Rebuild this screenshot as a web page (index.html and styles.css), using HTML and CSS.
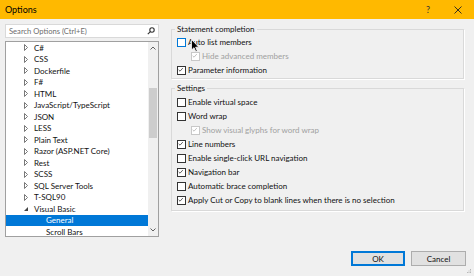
FILE: index.html
```html
<!DOCTYPE html>
<html lang="en">
<head>
  <meta charset="UTF-8">
  <title>Options</title>
  <link rel="stylesheet" href="styles.css">
</head>
<body>
  <div class="window">
    <div class="titlebar">
      <span class="title">Options</span>
      <span class="help">?</span>
      <svg class="close" width="8" height="8" viewBox="0 0 8 8"><path d="M0.5 0.5 L7.5 7.5 M7.5 0.5 L0.5 7.5"/></svg>
    </div>
    <div class="main">
      <div class="nav">
        <div class="search">
          <span class="placeholder">Search Options (Ctrl+E)</span>
          <svg class="magnifier" width="8" height="8" viewBox="0 0 8 8"><circle cx="5" cy="3" r="2.2"/><path d="M3.4 4.6 L0.8 7.2"/></svg>
        </div>
        <div class="tree">
          <ul class="items">
            <li><svg class="arrow" width="4" height="7" viewBox="0 0 4 7"><path d="M0.5 0.5 L3.5 3.5 L0.5 6.5 Z"/></svg>C#</li>
            <li><svg class="arrow" width="4" height="7" viewBox="0 0 4 7"><path d="M0.5 0.5 L3.5 3.5 L0.5 6.5 Z"/></svg>CSS</li>
            <li><svg class="arrow" width="4" height="7" viewBox="0 0 4 7"><path d="M0.5 0.5 L3.5 3.5 L0.5 6.5 Z"/></svg>Dockerfile</li>
            <li><svg class="arrow" width="4" height="7" viewBox="0 0 4 7"><path d="M0.5 0.5 L3.5 3.5 L0.5 6.5 Z"/></svg>F#</li>
            <li><svg class="arrow" width="4" height="7" viewBox="0 0 4 7"><path d="M0.5 0.5 L3.5 3.5 L0.5 6.5 Z"/></svg>HTML</li>
            <li><svg class="arrow" width="4" height="7" viewBox="0 0 4 7"><path d="M0.5 0.5 L3.5 3.5 L0.5 6.5 Z"/></svg>JavaScript/TypeScript</li>
            <li><svg class="arrow" width="4" height="7" viewBox="0 0 4 7"><path d="M0.5 0.5 L3.5 3.5 L0.5 6.5 Z"/></svg>JSON</li>
            <li><svg class="arrow" width="4" height="7" viewBox="0 0 4 7"><path d="M0.5 0.5 L3.5 3.5 L0.5 6.5 Z"/></svg>LESS</li>
            <li><svg class="arrow" width="4" height="7" viewBox="0 0 4 7"><path d="M0.5 0.5 L3.5 3.5 L0.5 6.5 Z"/></svg>Plain Text</li>
            <li><svg class="arrow" width="4" height="7" viewBox="0 0 4 7"><path d="M0.5 0.5 L3.5 3.5 L0.5 6.5 Z"/></svg>Razor (ASP.NET Core)</li>
            <li><svg class="arrow" width="4" height="7" viewBox="0 0 4 7"><path d="M0.5 0.5 L3.5 3.5 L0.5 6.5 Z"/></svg>Rest</li>
            <li><svg class="arrow" width="4" height="7" viewBox="0 0 4 7"><path d="M0.5 0.5 L3.5 3.5 L0.5 6.5 Z"/></svg>SCSS</li>
            <li><svg class="arrow" width="4" height="7" viewBox="0 0 4 7"><path d="M0.5 0.5 L3.5 3.5 L0.5 6.5 Z"/></svg>SQL Server Tools</li>
            <li><svg class="arrow" width="4" height="7" viewBox="0 0 4 7"><path d="M0.5 0.5 L3.5 3.5 L0.5 6.5 Z"/></svg>T-SQL90</li>
            <li><svg class="arrow open" width="4" height="7" viewBox="0 0 4 7"><path d="M4 2 L4 6 L0 6 Z"/></svg>Visual Basic</li>
            <li class="child selected">General</li>
            <li class="child">Scroll Bars</li>
          </ul>
          <div class="scrollbar">
            <svg class="chevron" width="6" height="4" viewBox="0 0 6 4"><path d="M0.5 3.5 L3 1 L5.5 3.5"/></svg>
            <div class="track"><div class="thumb"></div></div>
            <svg class="chevron" width="6" height="4" viewBox="0 0 6 4"><path d="M0.5 0.5 L3 3 L5.5 0.5"/></svg>
          </div>
        </div>
      </div>
      <div class="pane">
        <fieldset class="group first">
          <legend>Statement completion</legend>
          <div class="option"><span class="box hover"></span>Auto list members</div>
          <div class="option indent disabled"><span class="box checked"><svg viewBox="0 0 9 9"><path d="M1.8 4.6 L3.6 6.4 L7.2 2.4"/></svg></span>Hide advanced members</div>
          <div class="option"><span class="box checked"><svg viewBox="0 0 9 9"><path d="M1.8 4.6 L3.6 6.4 L7.2 2.4"/></svg></span>Parameter information</div>
        </fieldset>
        <fieldset class="group second">
          <legend>Settings</legend>
          <div class="option"><span class="box"></span>Enable virtual space</div>
          <div class="option"><span class="box"></span>Word wrap</div>
          <div class="option indent disabled"><span class="box checked"><svg viewBox="0 0 9 9"><path d="M1.8 4.6 L3.6 6.4 L7.2 2.4"/></svg></span>Show visual glyphs for word wrap</div>
          <div class="option"><span class="box checked"><svg viewBox="0 0 9 9"><path d="M1.8 4.6 L3.6 6.4 L7.2 2.4"/></svg></span>Line numbers</div>
          <div class="option"><span class="box"></span>Enable single-click URL navigation</div>
          <div class="option"><span class="box checked"><svg viewBox="0 0 9 9"><path d="M1.8 4.6 L3.6 6.4 L7.2 2.4"/></svg></span>Navigation bar</div>
          <div class="option"><span class="box"></span>Automatic brace completion</div>
          <div class="option"><span class="box checked"><svg viewBox="0 0 9 9"><path d="M1.8 4.6 L3.6 6.4 L7.2 2.4"/></svg></span>Apply Cut or Copy to blank lines when there is no selection</div>
        </fieldset>
      </div>
    </div>
    <div class="footer">
      <button class="btn default">OK</button>
      <button class="btn">Cancel</button>
    </div>
    <svg class="grip" width="5" height="5" viewBox="0 0 5 5"><rect x="3" y="0" width="1" height="1"/><rect x="1.5" y="1.5" width="1" height="1"/><rect x="3" y="1.5" width="1" height="1"/><rect x="0" y="3" width="1" height="1"/><rect x="1.5" y="3" width="1" height="1"/><rect x="3" y="3" width="1" height="1"/></svg>
    <svg class="cursor" width="9" height="14" viewBox="0 0 9 14"><path d="M0.5 0.5 L0.5 11 L3 8.7 L4.8 12.6 L6.3 11.9 L4.6 8.2 L7.8 8.2 Z"/></svg>
  </div>
</body>
</html>
```
FILE: styles.css
```css
* {
  box-sizing: border-box;
}
body {
  margin: 0;
  font-family: Lato, "Liberation Sans", sans-serif;
  font-size: 8px;
  color: #111;
  background: #f0f0f0;
}
.window {
  position: relative;
  width: 474px;
  height: 276px;
  display: flex;
  flex-direction: column;
  background: #f0f0f0;
}
.titlebar {
  height: 19px;
  background: #ffb900;
  display: flex;
  align-items: center;
  padding: 0 12px 0 5px;
}
.titlebar .title {
  flex: 1;
  font-size: 9px;
  color: #000;
}
.titlebar .help {
  font-size: 9px;
  margin-right: 24px;
  color: #333;
}
.titlebar .close path {
  stroke: #222;
  stroke-width: 0.9;
  fill: none;
}
.main {
  flex: 1;
  display: flex;
  gap: 12px;
  padding: 5px 10px 0 5px;
}
.nav {
  width: 154px;
  display: flex;
  flex-direction: column;
  gap: 3px;
}
.search {
  height: 14px;
  background: #fff;
  border: 1px solid #d9d9d9;
  display: flex;
  align-items: center;
  justify-content: space-between;
  padding: 0 3px;
  color: #6d6d6d;
  font-size: 7.6px;
}
.magnifier circle,
.magnifier path {
  fill: none;
  stroke: #333;
  stroke-width: 1.1;
}
.tree {
  height: 196px;
  background: #fff;
  border: 1px solid #a0a0a0;
  display: flex;
}
.items {
  flex: 1;
  list-style: none;
  margin: 0;
  padding: 0;
}
.items li {
  height: 11.5px;
  display: flex;
  align-items: center;
  padding-left: 18px;
}
.items li.child {
  padding-left: 40px;
}
.items li.selected {
  background: #0078d7;
  color: #fff;
}
.arrow {
  margin-right: 6px;
  flex-shrink: 0;
}
.arrow path {
  fill: #fff;
  stroke: #6a6a6a;
  stroke-width: 0.9;
}
.arrow.open path {
  fill: #444;
  stroke: none;
}
.scrollbar {
  width: 10px;
  background: #f0f0f0;
  display: flex;
  flex-direction: column;
  align-items: center;
}
.chevron {
  margin: 4px 0;
}
.chevron path {
  fill: none;
  stroke: #606060;
  stroke-width: 1;
}
.track {
  flex: 1;
  width: 100%;
  padding-top: 34px;
}
.thumb {
  height: 50px;
  margin: 0 1px;
  background: #cdcdcd;
}
.pane {
  flex: 1;
  display: flex;
  flex-direction: column;
  gap: 4px;
}
.group {
  margin: 0;
  padding: 1px 0 1px 5px;
  border: 1px solid #d9d9d9;
  box-shadow: 1px 1px 0 #fff;
  min-width: 0;
}
.group.second {
  padding-top: 2px;
  padding-bottom: 3px;
}
.group legend {
  padding: 0 2px;
  margin-left: -2px;
  line-height: 10px;
}
.option {
  height: 14px;
  display: flex;
  align-items: center;
  gap: 2px;
}
.option.indent {
  padding-left: 14px;
}
.option.disabled {
  color: #a0a0a0;
}
.box {
  width: 9px;
  height: 9px;
  border: 1px solid #333;
  background: #fff;
  flex-shrink: 0;
  display: flex;
}
.box svg {
  width: 7px;
  height: 7px;
}
.box svg path {
  fill: none;
  stroke: #333;
  stroke-width: 1;
  transform: translate(-1px, -1px);
}
.box.hover {
  border-color: #0078d7;
}
.disabled .box {
  border-color: #c8c8c8;
}
.disabled .box svg path {
  stroke: #b0b0b0;
}
.footer {
  height: 25px;
  display: flex;
  justify-content: flex-end;
  gap: 6px;
  padding-right: 8px;
}
.btn {
  height: 15px;
  width: 55px;
  padding: 0;
  font-family: inherit;
  font-size: 8px;
  color: #111;
  background: #e1e1e1;
  border: 1px solid #adadad;
  border-radius: 0;
}
.btn.default {
  width: 54px;
  border: 1px solid #0078d7;
  box-shadow: inset 0 0 0 1px #0078d7;
}
.grip {
  position: absolute;
  right: 2px;
  bottom: 2px;
}
.grip rect {
  fill: #b8b8b8;
}
.cursor {
  position: absolute;
  left: 191px;
  top: 39px;
}
.cursor path {
  fill: #000;
  stroke: #fff;
  stroke-width: 0.8;
}
```
